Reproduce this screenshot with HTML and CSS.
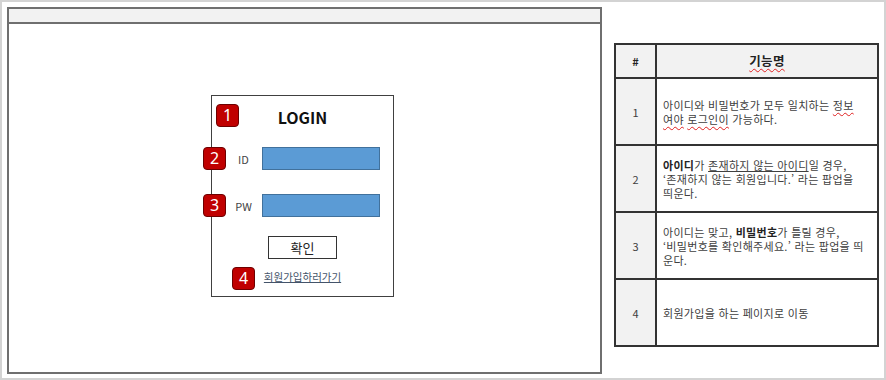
FILE: index.html
```html
<!DOCTYPE html>
<html lang="ko">
<head>
    <meta charset="UTF-8">
    <meta name="viewport" content="width=device-width, initial-scale=1.0">
    <title>로그인 화면 정의서</title>
    <link rel="stylesheet" href="styles.css">
</head>
<body>
    <div class="frame">
        <div class="window">
            <div class="window-bar"></div>
            <div class="window-body">
                <div class="login">
                    <span class="badge b1">1</span>
                    <span class="badge b2">2</span>
                    <span class="badge b3">3</span>
                    <span class="badge b4">4</span>

                    <div class="login-title">LOGIN</div>
                    <div class="field-row">
                        <span class="field-label">ID</span>
                        <div class="field"></div>
                    </div>
                    <div class="field-row pw">
                        <span class="field-label">PW</span>
                        <div class="field"></div>
                    </div>
                    <div class="confirm">확인</div>
                    <a class="join-link" href="#">회원가입하러가기</a>
                </div>
            </div>
        </div>

        <table class="spec">
            <tr class="head">
                <th class="num">#</th>
                <th><span class="spell">기능명</span></th>
            </tr>
            <tr>
                <td class="num">1</td>
                <td>아이디와 비밀번호가 모두 일치하는 <span class="spell">정보</span><br><span class="spell">여야</span> <span class="spell">로그인이</span> 가능하다.</td>
            </tr>
            <tr>
                <td class="num">2</td>
                <td><b>아이디</b>가 <u>존재하지 않는 아이디</u>일 경우,<br>‘존재하지 않는 회원입니다.’ 라는 팝업을<br>띄운다.</td>
            </tr>
            <tr>
                <td class="num">3</td>
                <td>아이디는 맞고, <b>비밀번호</b>가 틀릴 경우,<br>‘비밀번호를 확인해주세요.’ 라는 팝업을 띄<br>운다.</td>
            </tr>
            <tr>
                <td class="num">4</td>
                <td>회원가입을 하는 페이지로 이동</td>
            </tr>
        </table>
    </div>
</body>
</html>
```

FILE: styles.css
```css
body {
    margin: 0;
    padding: 0;
    font-family: "Noto Sans CJK KR", "Noto Sans", sans-serif;
    background-color: #fff;
    color: #333;
}

.frame {
    width: 886px;
    height: 380px;
    box-sizing: border-box;
    border: 2px solid #d3d3d3;
    padding: 5px 0 0 5px;
    display: flex;
    align-items: flex-start;
    gap: 12px;
}

/* 브라우저 창 */
.window {
    width: 595px;
    height: 367px;
    box-sizing: border-box;
    border: 2px solid #6f6f6f;
    flex-shrink: 0;
}

.window-bar {
    height: 13px;
    background-color: #f2f2f2;
    border-bottom: 2px solid #6f6f6f;
}

.window-body {
    display: flex;
    justify-content: center;
    padding: 71px 4px 0 0;
}

.login {
    position: relative;
    width: 183px;
    height: 202px;
    box-sizing: border-box;
    border: 1px solid #404040;
    padding-top: 10px;
}

.login-title {
    text-align: center;
    font-size: 16px;
    font-weight: bold;
    line-height: 22px;
    color: #111;
}

.field-row {
    display: flex;
    align-items: center;
    height: 23px;
    margin-top: 19px;
    padding-left: 13px;
}

.field-row.pw {
    margin-top: 24px;
}

.field-label {
    width: 37px;
    text-align: center;
    font-size: 11px;
    color: #444;
}

.field {
    width: 118px;
    height: 23px;
    box-sizing: border-box;
    background-color: #5b9bd5;
    border: 1px solid #41719c;
}

.confirm {
    width: 69px;
    height: 23px;
    box-sizing: border-box;
    margin: 19px auto 0;
    border: 1px solid #333;
    text-align: center;
    font-size: 13px;
    line-height: 21px;
    color: #222;
}

.join-link {
    display: block;
    margin-top: 11px;
    text-align: center;
    font-size: 10.5px;
    line-height: 14px;
    color: #44546a;
    text-decoration: underline;
}

.badge {
    position: absolute;
    width: 23px;
    height: 23px;
    box-sizing: border-box;
    background-color: #c00000;
    border: 1px solid #6e0000;
    border-radius: 4px;
    color: #fff;
    font-family: "Noto Sans", sans-serif;
    font-size: 16px;
    line-height: 21px;
    text-align: center;
}

.b1 { left: 4px; top: 8px; }
.b2 { left: -9px; top: 51px; }
.b3 { left: -9px; top: 98px; }
.b4 { left: 20px; top: 171px; }

/* 기능 정의 표 */
.spec {
    margin-top: 36px;
    width: 265px;
    border-collapse: collapse;
    border: 2px solid #333;
    font-size: 11px;
    letter-spacing: 0.3px;
    color: #404040;
}

.spec th,
.spec td {
    border: 2px solid #333;
    padding: 0 6px;
    line-height: 14px;
    vertical-align: middle;
}

.spec .head {
    height: 34px;
    background-color: #f2f2f2;
}

.spec th {
    font-weight: bold;
    font-size: 12.5px;
    color: #222;
}

.spec tr {
    height: 67px;
}

.spec .num {
    width: 27px;
    text-align: center;
    background-color: #f2f2f2;
    font-size: 11px;
    letter-spacing: 0;
}

.spec td b {
    color: #222;
}

.spell {
    text-decoration: underline wavy #e02020;
    text-decoration-thickness: 1px;
    text-underline-offset: 2px;
}
```
